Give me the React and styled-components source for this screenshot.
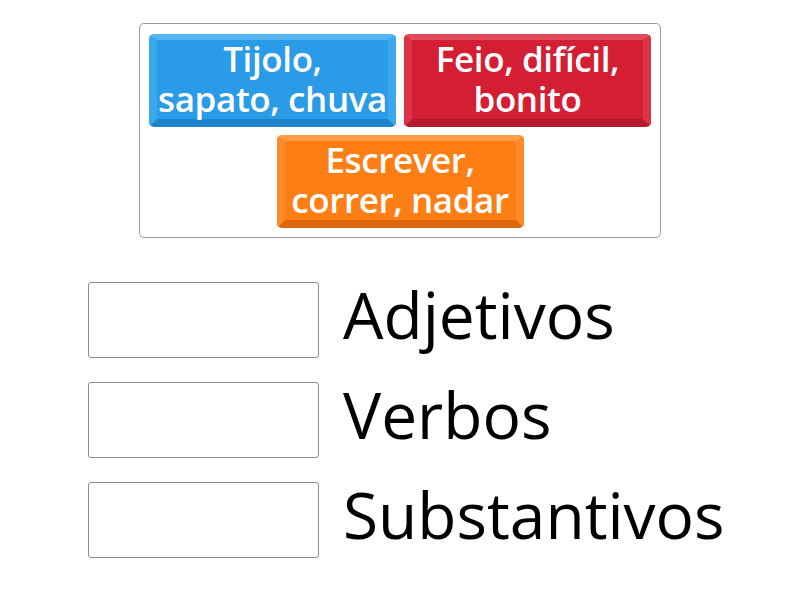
import styled, { createGlobalStyle } from 'styled-components';

const GlobalStyle = createGlobalStyle`
  body {
    margin: 0;
    background: #ffffff;
    font-family: "Open Sans", "Noto Sans", sans-serif;
  }
`;

const palette = {
  blue: { main: '#2a9be6', top: '#55b4f0', side: '#3ba7ec', bottom: '#1d84cb' },
  red: { main: '#d31e34', top: '#e24b5c', side: '#da3346', bottom: '#b5192b' },
  orange: { main: '#fd7e15', top: '#ff9d4a', side: '#ff8a2a', bottom: '#dd680b' },
};

const tiles = [
  { id: 1, color: 'blue', text: ['Tijolo,', 'sapato, chuva'] },
  { id: 2, color: 'red', text: ['Feio, difícil,', 'bonito'] },
  { id: 3, color: 'orange', text: ['Escrever,', 'correr, nadar'] },
];

const targets = ['Adjetivos', 'Verbos', 'Substantivos'];

export default function App() {
  return (
    <>
      <GlobalStyle />
      <Page>
        <TileBox>
          {tiles.map((t) => (
            <Tile key={t.id} $color={t.color}>
              {t.text.map((line) => (
                <span key={line}>{line}</span>
              ))}
            </Tile>
          ))}
        </TileBox>
        <Rows>
          {targets.map((label) => (
            <Row key={label}>
              <DropSlot />
              <Label>{label}</Label>
            </Row>
          ))}
        </Rows>
      </Page>
    </>
  );
}

const Page = styled.div`
  width: 800px;
  height: 600px;
  display: flex;
  flex-direction: column;
  align-items: center;
  padding-top: 23px;
  box-sizing: border-box;
`;

const TileBox = styled.div`
  width: 522px;
  box-sizing: border-box;
  border: 1px solid #9a9a9a;
  border-radius: 5px;
  padding: 10px 9px 9px;
  display: flex;
  flex-wrap: wrap;
  justify-content: center;
  gap: 8px 8px;
`;

const Tile = styled.div`
  width: 247px;
  height: 93px;
  box-sizing: border-box;
  border-radius: 5px;
  border-style: solid;
  border-width: 6px 8px 8px 8px;
  border-color: ${(p) => palette[p.$color].top} ${(p) => palette[p.$color].side}
    ${(p) => palette[p.$color].bottom} ${(p) => palette[p.$color].side};
  background: ${(p) => palette[p.$color].main};
  color: #ffffff;
  font-family: "Open Sans", sans-serif;
  font-weight: 600;
  font-size: 35px;
  line-height: 40px;
  padding-bottom: 2px;
  display: flex;
  flex-direction: column;
  align-items: center;
  justify-content: center;
  text-align: center;
  white-space: nowrap;
  letter-spacing: -0.4px;
  span {
    display: block;
  }
`;

const Rows = styled.div`
  width: 800px;
  margin-top: 44px;
  padding-left: 88px;
  box-sizing: border-box;
  display: flex;
  flex-direction: column;
  gap: 24px;
`;

const Row = styled.div`
  display: flex;
  align-items: center;
  gap: 24px;
  height: 76px;
`;

const DropSlot = styled.div`
  width: 231px;
  height: 76px;
  box-sizing: border-box;
  border: 1px solid #8c8c8c;
  border-radius: 3px;
  background: #ffffff;
  flex-shrink: 0;
`;

const Label = styled.div`
  font-family: "Open Sans", sans-serif;
  font-size: 64px;
  line-height: 76px;
  color: #000000;
  white-space: nowrap;
  position: relative;
  top: -5px;
`;
